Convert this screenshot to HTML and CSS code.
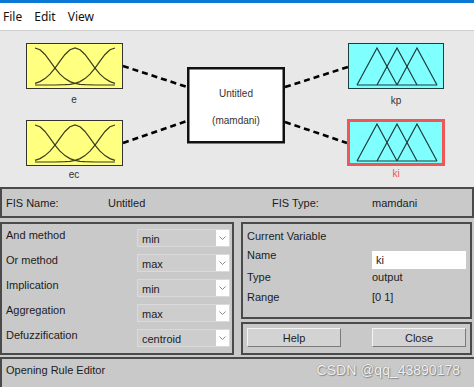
FILE: index.html
```html
<!DOCTYPE html>
<html lang="en">
<head>
  <meta charset="UTF-8">
  <title>Fuzzy Logic Designer: Untitled</title>
  <link rel="stylesheet" href="styles.css">
</head>
<body>

  <div class="titlebar"></div>

  <nav class="menubar">
    <span>File</span>
    <span>Edit</span>
    <span>View</span>
  </nav>

  <!-- FIS diagram -->
  <div class="diagram">
    <svg width="474" height="156" viewBox="0 31 474 156">
      <defs>
        <g id="gauss" fill="none" stroke="#3b3b1e" stroke-width="1.2">
          <polyline points="35,48 40,49.8 45,54.5 50,61.1 55,68.1 60,74.1 65,78.6 70,81.6 75,83.4 80,84.3 85,84.7 95,85 115,85"/>
          <polyline points="35,83.4 40,81.6 45,78.6 50,74.1 55,68.1 60,61.1 65,54.5 70,49.8 75,48 80,49.8 85,54.5 90,61.1 95,68.1 100,74.1 105,78.6 110,81.6 115,83.4"/>
          <polyline points="35,85 55,85 65,84.7 70,84.3 75,83.4 80,81.6 85,78.6 90,74.1 95,68.1 100,61.1 105,54.5 110,49.8 115,48"/>
        </g>
        <g id="tri" fill="none" stroke="#1d3c3c" stroke-width="1.2">
          <polyline points="357,85 377,48 397,85"/>
          <polyline points="377,85 397,48 417,85"/>
          <polyline points="397,85 417,48 437,85"/>
          <line x1="357" y1="85" x2="437" y2="85"/>
        </g>
      </defs>

      <g class="links">
        <line x1="123" y1="66" x2="187" y2="87"/>
        <line x1="123" y1="143" x2="187" y2="121"/>
        <line x1="285" y1="87" x2="348" y2="67"/>
        <line x1="285" y1="122" x2="347" y2="143"/>
      </g>

      <!-- inputs -->
      <rect class="mf-in" x="26.5" y="43.5" width="96" height="45"/>
      <use href="#gauss"/>
      <text class="label" x="74" y="99">e</text>

      <rect class="mf-in" x="26.5" y="120.5" width="96" height="45"/>
      <use href="#gauss" transform="translate(0,77)"/>
      <text class="label" x="74" y="174">ec</text>

      <!-- system -->
      <rect class="system" x="188.25" y="68.25" width="95.5" height="74"/>
      <text class="label" x="236" y="93">Untitled</text>
      <text class="label" x="236" y="120">(mamdani)</text>

      <!-- outputs -->
      <rect class="mf-out" x="348.5" y="43.5" width="95" height="45"/>
      <use href="#tri"/>
      <text class="label" x="396" y="100">kp</text>

      <rect class="mf-out selected" x="348.5" y="120.5" width="95" height="44"/>
      <use href="#tri" transform="translate(0,76)"/>
      <text class="label selected-label" x="396" y="173">ki</text>
    </svg>
  </div>

  <section class="frame fis-bar">
    <span>FIS Name:</span>
    <span>Untitled</span>
    <span>FIS Type:</span>
    <span>mamdani</span>
  </section>

  <div class="props">

    <!-- methods -->
    <section class="frame methods">
      <span class="method-label">And method</span>
      <div class="select"><span>min</span><i class="arrow"><svg width="7" height="4" viewBox="0 0 7 4"><polyline points="0.5,0.5 3.5,3.5 6.5,0.5"/></svg></i></div>
      <span class="method-label">Or method</span>
      <div class="select"><span>max</span><i class="arrow"><svg width="7" height="4" viewBox="0 0 7 4"><polyline points="0.5,0.5 3.5,3.5 6.5,0.5"/></svg></i></div>
      <span class="method-label">Implication</span>
      <div class="select"><span>min</span><i class="arrow"><svg width="7" height="4" viewBox="0 0 7 4"><polyline points="0.5,0.5 3.5,3.5 6.5,0.5"/></svg></i></div>
      <span class="method-label">Aggregation</span>
      <div class="select"><span>max</span><i class="arrow"><svg width="7" height="4" viewBox="0 0 7 4"><polyline points="0.5,0.5 3.5,3.5 6.5,0.5"/></svg></i></div>
      <span class="method-label">Defuzzification</span>
      <div class="select"><span>centroid</span><i class="arrow"><svg width="7" height="4" viewBox="0 0 7 4"><polyline points="0.5,0.5 3.5,3.5 6.5,0.5"/></svg></i></div>
    </section>

    <div class="side">
      <section class="frame variable">
        <div class="var-title">Current Variable</div>
        <div class="var-row name-row">
          <span>Name</span>
          <div class="textbox">ki</div>
        </div>
        <div class="var-row">
          <span>Type</span>
          <span>output</span>
        </div>
        <div class="var-row">
          <span>Range</span>
          <span>[0 1]</span>
        </div>
      </section>

      <section class="frame actions">
        <button>Help</button>
        <button>Close</button>
      </section>
    </div>

  </div>

  <footer class="frame status">
    <span>Opening Rule Editor</span>
    <span class="watermark">CSDN @qq_43890178</span>
  </footer>

</body>
</html>
```

FILE: styles.css
```css
body {
  margin: 0;
  width: 474px;
  height: 387px;
  overflow: hidden;
  font-family: "Liberation Sans", Arial, sans-serif;
  font-size: 11px;
  color: #1c1c1c;
  background: #c9c9c9;
}
.titlebar {
  height: 3px;
  background: #0b78d6;
}
.menubar {
  height: 27px;
  background: #fff;
  border-bottom: 1px solid #cfcfcf;
  display: flex;
  align-items: center;
  gap: 12px;
  padding-left: 3px;
  font-family: "Noto Sans", sans-serif;
  font-size: 12px;
  color: #111;
}
.diagram {
  height: 156px;
  background: #e8e8e8;
}
.diagram svg {
  display: block;
}
.links line {
  stroke: #000;
  stroke-width: 2.6;
  stroke-dasharray: 6 4;
}
.mf-in {
  fill: #ffff80;
  stroke: #333;
  stroke-width: 1;
}
.mf-out {
  fill: #80ffff;
  stroke: #1d3c3c;
  stroke-width: 1;
}
.mf-out.selected {
  stroke: #ef5656;
  stroke-width: 3;
}
.system {
  fill: #fff;
  stroke: #111;
  stroke-width: 2.5;
}
.label {
  font-family: "Liberation Sans", Arial, sans-serif;
  font-size: 10px;
  fill: #333;
  text-anchor: middle;
  dominant-baseline: central;
}
.selected-label {
  fill: #ef5656;
}

/* panels */
.frame {
  box-sizing: border-box;
  border: 2px solid #4a4a4a;
  background: #c9c9c9;
}
.fis-bar {
  height: 31px;
  display: grid;
  grid-template-columns: 102px 164px 100px auto;
  align-items: center;
  padding-left: 4px;
}
.props {
  display: flex;
  gap: 7px;
  margin-top: 4px;
  height: 133px;
}
.methods {
  width: 234px;
  display: grid;
  grid-template-columns: 131px 93px;
  grid-auto-rows: 19px;
  row-gap: 6px;
  align-items: start;
  padding: 5px 0 0 4px;
}
.method-label {
  line-height: 13px;
}
.select {
  height: 18px;
  box-sizing: border-box;
  display: flex;
  align-items: center;
  justify-content: space-between;
  background: #cdcdcd;
  border: 1px solid #dadada;
  padding-left: 4px;
}
.select span {
  padding-top: 1px;
}
.arrow {
  width: 13px;
  height: 16px;
  background: #fff;
  display: flex;
  align-items: center;
  justify-content: center;
}
.arrow svg {
  fill: none;
  stroke: #8a8a8a;
  stroke-width: 1;
}
.side {
  flex: 1;
  display: flex;
  flex-direction: column;
  gap: 3px;
  margin-right: 2px;
}
.variable {
  height: 97px;
  padding: 6px 0 0 4px;
  line-height: 13px;
}
.var-title {
  height: 19px;
}
.var-row {
  display: grid;
  grid-template-columns: 125px 94px;
  height: 20px;
}
.name-row {
  height: 22px;
}
.textbox {
  margin-top: 2px;
  height: 18px;
  box-sizing: border-box;
  background: #fff;
  padding: 3px 0 0 4px;
}
.actions {
  height: 33px;
  display: flex;
  gap: 31px;
  padding: 4px 0 0 4px;
}
button {
  width: 94px;
  height: 19px;
  padding: 0;
  font-family: "Liberation Sans", Arial, sans-serif;
  font-size: 11px;
  color: #1c1c1c;
  background: #d3d3d3;
  border: 1px solid;
  border-color: #f4f4f4 #7a7a7a #7a7a7a #f4f4f4;
}
.status {
  margin-top: 2px;
  height: 31px;
  border-bottom: none;
  border-right: none;
  display: flex;
  align-items: flex-start;
  justify-content: space-between;
  padding: 5px 14px 0 4px;
  line-height: 13px;
}
.watermark {
  font-size: 14px;
  line-height: 13px;
  color: #f2f2f2;
  text-shadow: 0 0 1px #777, 1px 1px 1px #888;
}
```
